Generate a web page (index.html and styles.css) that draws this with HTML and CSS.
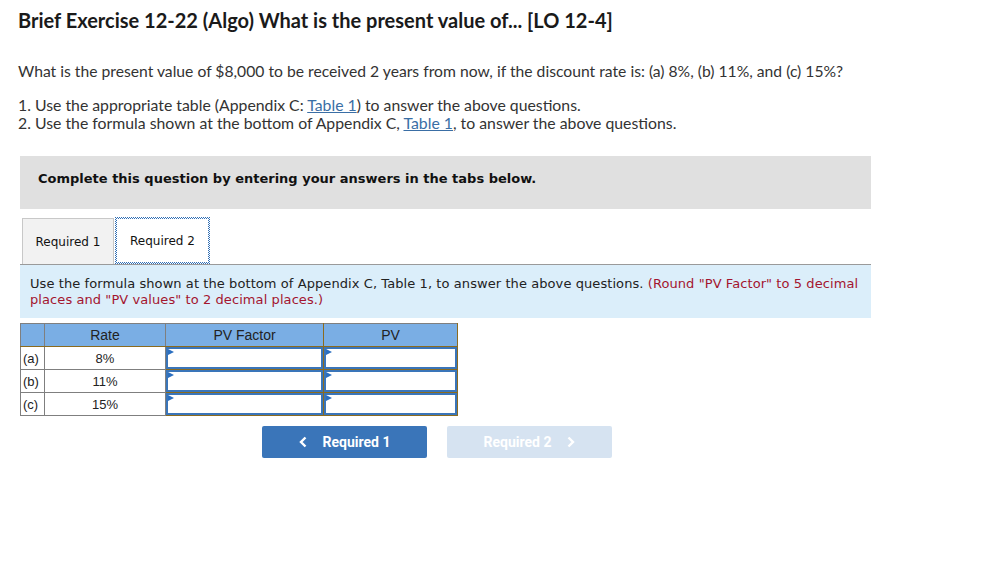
FILE: index.html
```html
<!DOCTYPE html>
<html>
<head>
<meta charset="utf-8">
<link rel="stylesheet" href="styles.css">
</head>
<body>
<div class="page">
  <h1 class="title">Brief Exercise 12-22 (Algo) What is the present value of... [LO 12-4]</h1>
  <p class="question">What is the present value of $8,000 to be received 2 years from now, if the discount rate is: (a) 8%, (b) 11%, and (c) 15%?</p>
  <div class="steps">
    <div>1. Use the appropriate table (Appendix C: <a class="link">Table 1</a>) to answer the above questions.</div>
    <div>2. Use the formula shown at the bottom of Appendix C, <a class="link">Table 1</a>, to answer the above questions.</div>
  </div>
  <div class="notice">Complete this question by entering your answers in the tabs below.</div>
  <div class="tabs">
    <div class="tab">Required 1</div>
    <div class="tab active">Required 2</div>
  </div>
  <div class="instr">Use the formula shown at the bottom of Appendix C, Table 1, to answer the above questions. <span class="red">(Round "PV Factor" to 5 decimal places and "PV values" to 2 decimal places.)</span></div>
  <table class="grid">
    <thead>
      <tr><th class="c0"></th><th class="c1">Rate</th><th class="c2">PV Factor</th><th class="c3">PV</th></tr>
    </thead>
    <tbody>
      <tr><td class="lbl">(a)</td><td class="rate">8%</td><td class="inp"><div class="box"></div></td><td class="inp"><div class="box"></div></td></tr>
      <tr><td class="lbl">(b)</td><td class="rate">11%</td><td class="inp"><div class="box"></div></td><td class="inp"><div class="box"></div></td></tr>
      <tr><td class="lbl">(c)</td><td class="rate">15%</td><td class="inp"><div class="box"></div></td><td class="inp"><div class="box"></div></td></tr>
    </tbody>
  </table>
  <div class="nav">
    <div class="btn prev"><svg class="chev left" width="8" height="12" viewBox="0 0 8 12"><path d="M6.5 1.5 L2 6 L6.5 10.5" fill="none" stroke="#fff" stroke-width="2.4"/></svg>Required 1</div>
    <div class="btn next">Required 2<svg class="chev right" width="8" height="12" viewBox="0 0 8 12"><path d="M1.5 1.5 L6 6 L1.5 10.5" fill="none" stroke="#fff" stroke-width="2.4"/></svg></div>
  </div>
</div>
</body>
</html>
```
FILE: styles.css
```css
html, body { margin: 0; padding: 0; background: #fff; }
.page { padding: 0 0 0 18px; font-family: Lato, "Liberation Sans", sans-serif; color: #333; }
.title { margin: 0; padding-top: 9px; font-size: 20px; font-weight: 700; color: #1a1a1a; line-height: 22px; }
.question { margin: 30px 0 0 0; font-size: 15.7px; line-height: 20px; color: #333; }
.steps { margin-top: 15px; font-size: 15.8px; line-height: 18px; color: #333; }
.link { color: #3a6ea5; text-decoration: underline; }
.notice { margin: 24px 0 0 2px; padding-left: 18px; padding-top: 15px; box-sizing: content-box; background: #e0e0e0; font-family: Verdana, "DejaVu Sans", sans-serif; font-size: 13px; font-weight: 700; color: #111; height: 38px; width: 833px; }
.tabs { display: flex; margin: 8px 0 0 4px; height: 47px; align-items: flex-end; }
.tab { width: 92px; height: 46px; box-sizing: border-box; border: 1px solid #c8c8c8; border-bottom: none; background: #f2f2f2; display: flex; align-items: center; justify-content: center; font-family: Verdana, "DejaVu Sans", sans-serif; font-size: 12px; color: #111; }
.tab.active { background: #fff; width: 95px; height: 47px; border: 1px dotted #2f6eb5; outline: 1px dotted #2f6eb5; outline-offset: -2px; margin-left: 1px; padding-top: 1px; }
.instr { margin-left: 2px; width: 833px; padding: 11px 8px 0 10px; height: 42px; background: #dbeefa; border-top: 1px solid #9a9a9a; font-family: Verdana, "DejaVu Sans", sans-serif; font-size: 13px; line-height: 16px; letter-spacing: 0.08px; color: #222; }
.red { color: #a3152f; }
.grid { margin: 5px 0 0 2px; border-collapse: collapse; font-family: "Liberation Sans", Arial, sans-serif; font-size: 13px; color: #222; }
.grid th { background: #7aaee4; height: 22px; font-weight: 400; font-size: 14px; padding: 0; border: 1px solid #7f7f7f; border-bottom: 1px solid #8b6b1f; }
.grid th.c3, .grid th.c2 { border-left-color: #8b6b1f; border-right-color: #8b6b1f; }
.c0 { width: 23px; }
.c1 { width: 120px; }
.c2 { width: 157px; }
.c3 { width: 133px; }
.grid td { height: 22px; padding: 0; border: 1px solid #7f7f7f; text-align: center; }
.grid td.lbl { text-align: left; padding-left: 2px; }
.grid td.inp { border: 1px solid #8b6b1f; border-left-color: #7f7f7f; }
.box { height: 22px; box-sizing: border-box; border: 2px solid #3a75b9; position: relative; }
.box::before { content: ""; position: absolute; left: 0; top: 0; border-left: 6px solid #2b6fc0; border-top: 3px solid transparent; border-bottom: 3px solid transparent; }
.nav { display: flex; margin: 10px 0 0 244px; gap: 20px; }
.btn { width: 165px; height: 32px; border-radius: 2px; display: flex; align-items: center; justify-content: center; font-family: Roboto, "Liberation Sans", sans-serif; font-weight: 700; font-size: 14px; color: #fff; }
.prev { background: #3a75b9; }
.next { background: #d6e3f1; }
.chev { display: block; }
.left { margin-right: 16px; }
.right { margin-left: 16px; }
```
